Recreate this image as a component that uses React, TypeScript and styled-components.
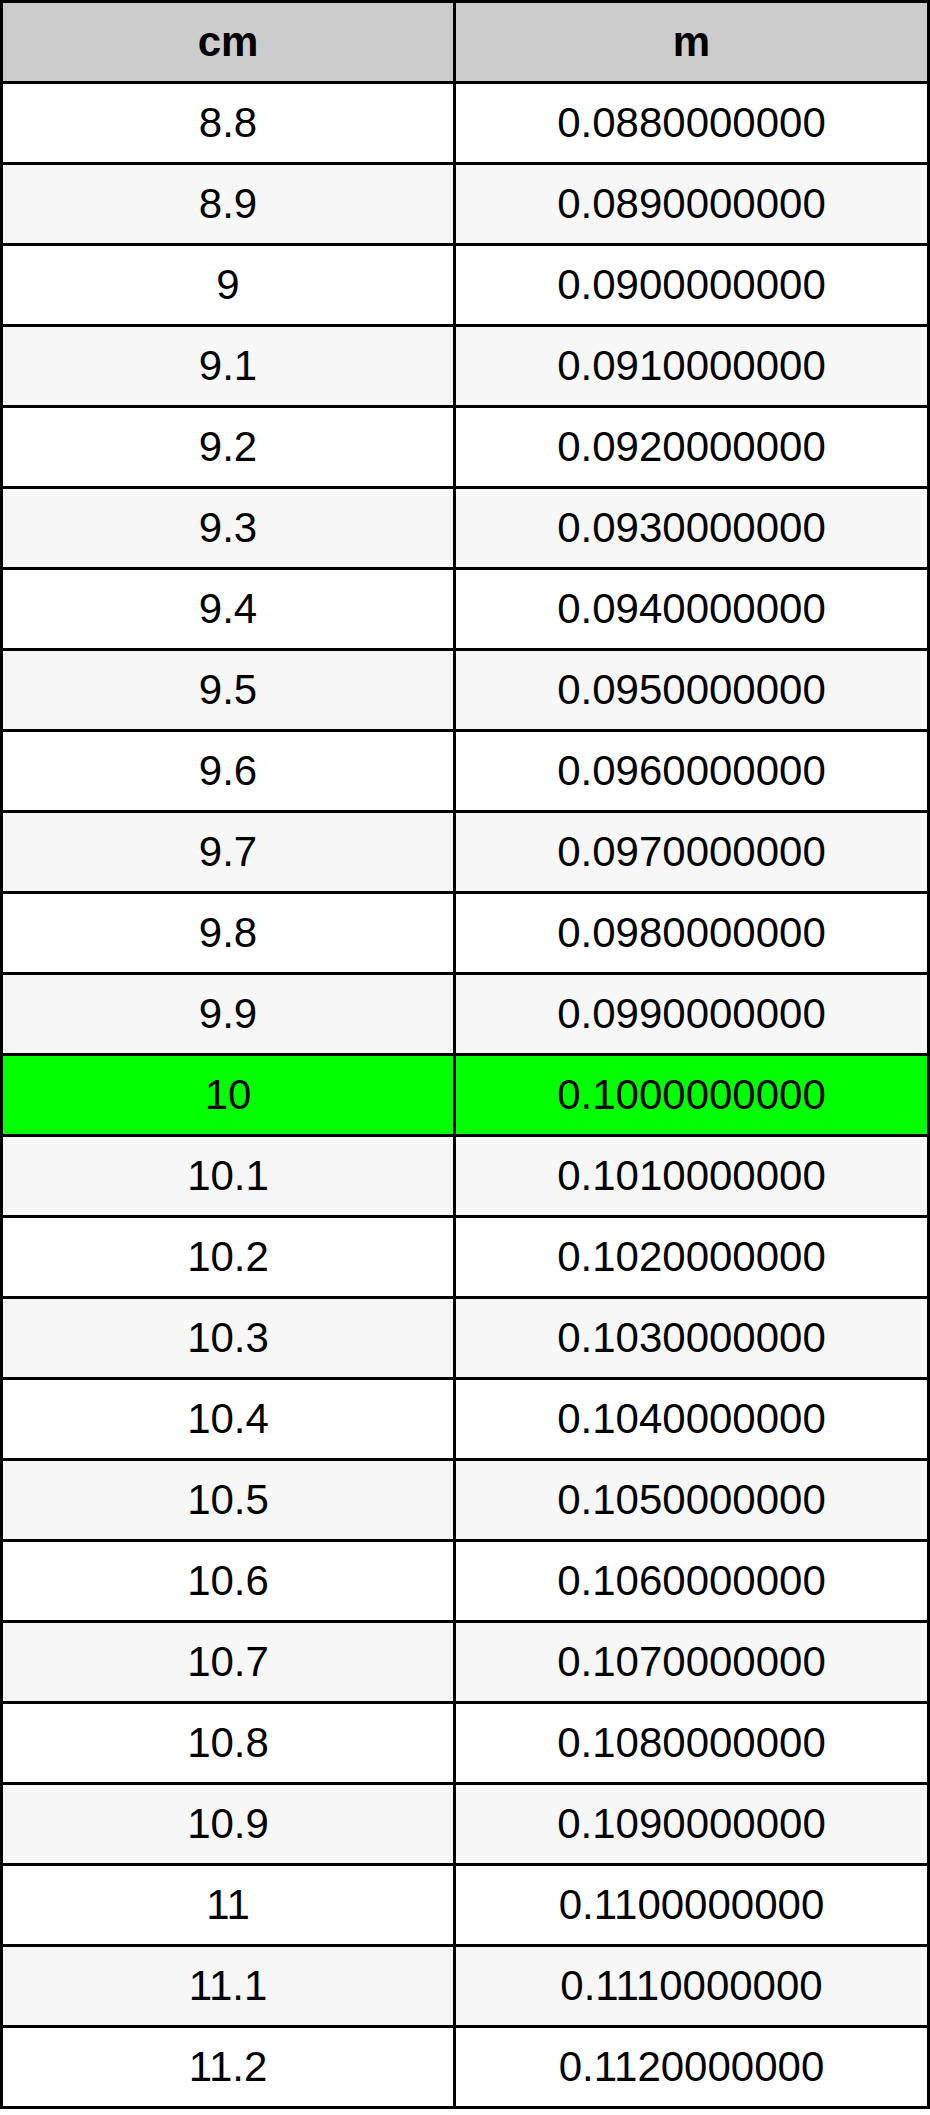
import styled, { createGlobalStyle } from 'styled-components'

const GlobalStyle = createGlobalStyle`
  html, body {
    margin: 0;
    padding: 0;
    background: #ffffff;
  }

  body {
    font-family: 'Liberation Sans', Arial, sans-serif;
  }
`

type Row = { cm: string; m: string }

const rows: Row[] = []
for (let i = 88; i <= 112; i++) {
  const cm = (i / 10).toString()
  const m = (i / 1000).toFixed(10)
  rows.push({ cm, m })
}

export default function App() {
  return (
    <>
      <GlobalStyle />
      <Table>
        <HeaderCell>cm</HeaderCell>
        <HeaderCell>m</HeaderCell>
        {rows.map((row, index) => {
          const tone = row.cm === '10' ? 'highlight' : index % 2 === 0 ? 'even' : 'odd'
          return [
            <Cell key={row.cm + '-cm'} $tone={tone}>
              {row.cm}
            </Cell>,
            <Cell key={row.cm + '-m'} $tone={tone}>
              {row.m}
            </Cell>,
          ]
        })}
      </Table>
    </>
  )
}

const Table = styled.div`
  display: grid;
  grid-template-columns: 450px 471px;
  grid-auto-rows: 78px;
  gap: 3px;
  padding: 3px;
  width: 930px;
  box-sizing: border-box;
  background: #000000;
`

const HeaderCell = styled.div`
  display: flex;
  align-items: center;
  justify-content: center;
  background: #cccccc;
  color: #000000;
  font-size: 42px;
  font-weight: bold;
`

const toneColors = {
  even: '#ffffff',
  odd: '#f7f7f7',
  highlight: '#00ff00',
}

const Cell = styled.div<{ $tone: keyof typeof toneColors }>`
  display: flex;
  align-items: center;
  justify-content: center;
  background: ${(props) => toneColors[props.$tone]};
  color: #000000;
  font-size: 42px;
`
